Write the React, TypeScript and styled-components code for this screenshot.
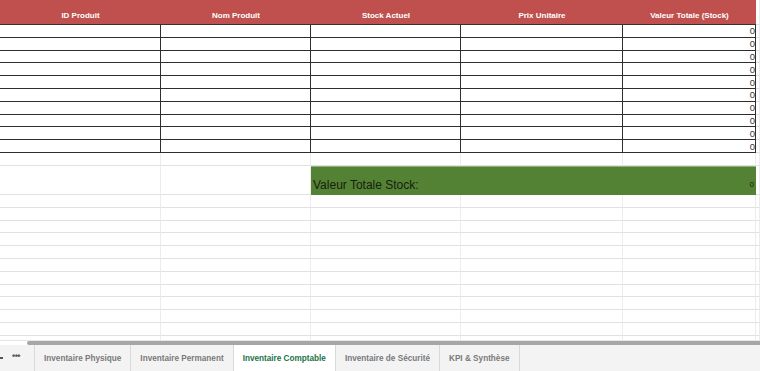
import React from 'react';
import styled, { createGlobalStyle } from 'styled-components';

const COLS = '161px 150px 150px 162px 133px 1fr';

const GlobalStyle = createGlobalStyle`
  html, body {
    margin: 0;
    padding: 0;
    background: #ffffff;
    overflow: hidden;
  }
  body {
    font-family: "Liberation Sans", Arial, sans-serif;
  }
`;

const Page = styled.div`
  width: 760px;
  height: 371px;
  display: flex;
  flex-direction: column;
  overflow: hidden;
`;

const Sheet = styled.div`
  height: 340px;
  overflow: hidden;
  display: flex;
  flex-direction: column;
`;

const Row = styled.div<{ $h: number }>`
  display: grid;
  grid-template-columns: ${COLS};
  height: ${(p) => p.$h}px;
  flex: none;
`;

const HeadCell = styled.div`
  background: #c0504d;
  color: #ffffff;
  font-weight: 700;
  font-size: 8px;
  display: flex;
  align-items: flex-end;
  justify-content: center;
  padding-bottom: 4px;
  border-bottom: 1px solid #333333;
  box-sizing: border-box;
`;

const DataCell = styled.div`
  border-right: 1px solid #2e2e2e;
  border-bottom: 1px solid #2e2e2e;
  box-sizing: border-box;
  display: flex;
  align-items: center;
  justify-content: flex-end;
  font-size: 9.5px;
  color: #333333;
  padding-right: 0;
  overflow: hidden;
`;

const BlankCell = styled.div<{ $top?: boolean }>`
  border-right: 1px solid #ececec;
  border-bottom: 1px solid #e1e1e1;
  box-sizing: border-box;
`;

const TotalCell = styled.div`
  grid-column: span 3;
  background: #548235;
  border-top: 1px solid #8fb07a;
  box-sizing: border-box;
  display: flex;
  align-items: flex-end;
  justify-content: space-between;
  padding: 0 2px 3px 2px;
  color: #16200e;
`;

const TotalLabel = styled.span`
  font-size: 12px;
  line-height: 14px;
`;

const TotalValue = styled.span`
  font-size: 8px;
  line-height: 10px;
  margin-bottom: 2px;
`;

const Scroller = styled.div`
  height: 5px;
  flex: none;
  display: flex;
  align-items: flex-end;
  background: #ffffff;
  border-top: 1px solid #e6e6e6;
  box-sizing: border-box;
`;

const Thumb = styled.div`
  margin-left: 27px;
  flex: 1;
  height: 4px;
  background: #a6a6a6;
  border-radius: 2px 0 0 2px;
`;

const TabBar = styled.div`
  height: 26px;
  flex: none;
  display: flex;
  align-items: stretch;
  background: #f3f3f3;
`;

const Nav = styled.div`
  width: 35px;
  border-right: 1px solid #d9d9d9;
  display: flex;
  align-items: center;
  gap: 9px;
  color: #555555;
  font-size: 10px;
  font-weight: 700;
  box-sizing: border-box;
`;

const Dash = styled.span`
  width: 3px;
  height: 1.5px;
  background: #555555;
`;

const Dots = styled.span`
  letter-spacing: -0.5px;
  font-size: 9px;
  line-height: 9px;
  padding-bottom: 3px;
`;

const Tab = styled.div<{ $active?: boolean }>`
  display: flex;
  align-items: center;
  padding: 0 9px;
  border-right: 1px solid #d9d9d9;
  font-size: 8.2px;
  font-weight: 700;
  white-space: nowrap;
  color: ${(p) => (p.$active ? '#217346' : '#7a7a7a')};
  background: ${(p) => (p.$active ? '#ffffff' : 'transparent')};
`;

const headers = ['ID Produit', 'Nom Produit', 'Stock Actuel', 'Prix Unitaire', 'Valeur Totale (Stock)'];
const tabs = ['Inventaire Physique', 'Inventaire Permanent', 'Inventaire Comptable', 'Inventaire de Sécurité', 'KPI & Synthèse'];

export default function App() {
  const rows = Array.from({ length: 10 });
  const filler = Array.from({ length: 12 });

  return (
    <>
      <GlobalStyle />
      <Page>
        <Sheet>
          <Row $h={25}>
            {headers.map((h) => (
              <HeadCell key={h}>{h}</HeadCell>
            ))}
            <BlankCell />
          </Row>

          {rows.map((_, i) => (
            <Row $h={12.8} key={i}>
              <DataCell />
              <DataCell />
              <DataCell />
              <DataCell />
              <DataCell>0</DataCell>
              <BlankCell />
            </Row>
          ))}

          <Row $h={13}>
            {Array.from({ length: 6 }).map((_, i) => (
              <BlankCell key={i} />
            ))}
          </Row>

          <Row $h={29}>
            <BlankCell />
            <BlankCell />
            <TotalCell>
              <TotalLabel>Valeur Totale Stock:</TotalLabel>
              <TotalValue>0</TotalValue>
            </TotalCell>
            <BlankCell />
          </Row>

          {filler.map((_, i) => (
            <Row $h={12.8} key={'f' + i}>
              {Array.from({ length: 6 }).map((__, j) => (
                <BlankCell key={j} />
              ))}
            </Row>
          ))}
        </Sheet>

        <Scroller>
          <Thumb />
        </Scroller>

        <TabBar>
          <Nav>
            <Dash />
            <Dots>•••</Dots>
          </Nav>
          {tabs.map((t) => (
            <Tab key={t} $active={t === 'Inventaire Comptable'}>
              {t}
            </Tab>
          ))}
        </TabBar>
      </Page>
    </>
  );
}
